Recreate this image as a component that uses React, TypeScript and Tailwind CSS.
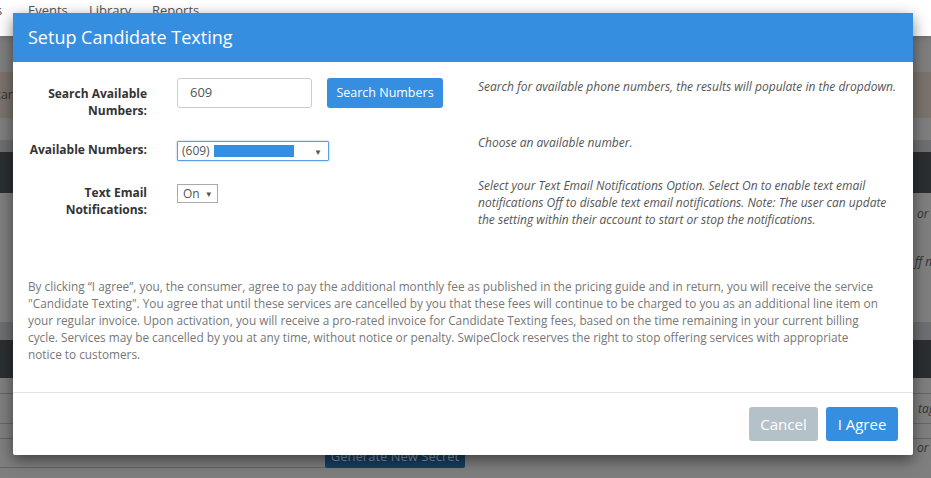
const FONT = "font-['Open_Sans','Noto_Sans',sans-serif]";

function Caret() {
  return <span className="text-[8px] leading-none text-[#555]">▼</span>;
}

const LABEL = '-ml-[3px] w-[122px] whitespace-nowrap pt-[7px] text-right text-[12px] font-bold leading-[17px] text-[#333]';
const DESC = 'ml-[15px] flex-1 whitespace-nowrap text-[12px] italic leading-[17px] text-[#555]';

export default function App() {
  return (
    <div className={`relative h-[478px] w-[931px] overflow-hidden bg-[#7f7f7f] ${FONT}`}>
      {/* Page behind the overlay */}
      <nav className="relative z-10 flex h-9 items-start bg-white pt-[1px] text-[13px] text-[#555] shadow-[0_2px_6px_rgba(0,0,0,0.15)]">
        <span className="-ml-[4px] w-[32px]">s</span>
        <span className="w-[61px]">Events</span>
        <span className="w-[63px]">Library</span>
        <span>Reports</span>
      </nav>
      <div className="flex flex-col">
        <div className="h-[36px]" />
        <div className="flex h-[46px] items-center bg-[#7b736c] text-[13px] text-[#3a3633]">
          <span className="-ml-[4px]">tar</span>
        </div>
        <div className="h-[22px]" />
        <div className="h-[12px] bg-[#6d6f72]" />
        <div className="h-[41px] bg-[#2c2f32]" />
        <div className="flex h-[129px] flex-col items-end pt-[12px] text-[12px] italic text-[#333]">
          <span className="-mr-[6px]">or c</span>
          <span className="mt-[30px] -mr-[8px]">ff no</span>
        </div>
        <div className="h-[18px] bg-[#6d6f72]" />
        <div className="h-[38px] bg-[#2c2f32]" />
        <div className="h-[16px] border-b border-[#666]" />
        <div className="flex h-[30px] items-center justify-end border-b border-[#666] text-[12px] italic text-[#333]">
          <span className="-mr-[4px]">tag</span>
        </div>
        <div className="h-[15px] border-b border-[#666]" />
        <div className="flex h-[30px] items-start">
          <div className="h-[29px] w-[325px] border-b border-[#666]" />
          <div className="mt-[6px] flex h-[23px] w-[140px] items-center justify-center rounded-[2px] bg-[#173f63] text-[13px] text-[#8797a8]">
            Generate New Secret
          </div>
          <div className="flex flex-1 justify-end pt-[0px] text-[12px] italic text-[#333]">
            <span className="-mr-[6px]">or c</span>
          </div>
        </div>
      </div>

      {/* Modal */}
      <div className="absolute left-[13px] top-[13px] z-20 flex w-[900px] flex-col rounded-[2px] bg-white shadow-[0_5px_15px_rgba(0,0,0,0.5)]">
        <div className="flex h-[49px] items-center bg-[#368ee0] px-[15px] text-[18px] text-white">
          Setup Candidate Texting
        </div>

        <div className="flex flex-col px-[15px] pb-[29px] pt-[16px]">
          {/* Search */}
          <div className="flex items-start">
            <label className={LABEL}>
              Search Available
              <br />
              Numbers:
            </label>
            <div className="ml-[30px] flex w-[286px] items-start gap-[15px]">
              <div className="flex h-[30px] w-[135px] items-center rounded-[3px] border border-[#ccc] px-[12px] text-[13px] text-[#555]">
                609
              </div>
              <button className="h-[30px] w-[116px] rounded-[3px] bg-[#368ee0] text-[12.5px] text-white">
                Search Numbers
              </button>
            </div>
            <p className={DESC}>Search for available phone numbers, the results will populate in the dropdown.</p>
          </div>

          {/* Available numbers */}
          <div className="mt-[15px] flex items-start">
            <label className={LABEL}>Available Numbers:</label>
            <div className="ml-[30px] w-[286px] pt-[7px]">
              <div className="flex h-[20px] w-[152px] items-center rounded-[1px] border border-[#5a9ee6] pl-[4px] pr-[6px] text-[12px] text-[#555] shadow-[0_0_2px_rgba(54,142,224,0.6)]">
                <span>(609)</span>
                <span className="ml-[4px] h-[12px] w-[80px] bg-[#368ee0]" />
                <span className="ml-auto">
                  <Caret />
                </span>
              </div>
            </div>
            <p className={DESC}>Choose an available number.</p>
          </div>

          {/* Notifications */}
          <div className="mt-[16px] flex items-start">
            <label className={LABEL}>
              Text Email
              <br />
              Notifications:
            </label>
            <div className="ml-[30px] w-[286px] pt-[7px]">
              <div className="flex h-[19px] w-[41px] items-center gap-[5px] border border-[#a9a9a9] pl-[5px] text-[12px] text-[#555]">
                <span>On</span>
                <Caret />
              </div>
            </div>
            <p className={DESC}>
              Select your Text Email Notifications Option. Select On to enable text email
              <br />
              notifications Off to disable text email notifications. Note: The user can update
              <br />
              the setting within their account to start or stop the notifications.
            </p>
          </div>

          {/* Terms */}
          <p className="mt-[50px] whitespace-nowrap text-[11.8px] leading-[17px] text-[#777]">
            By clicking “I agree”, you, the consumer, agree to pay the additional monthly fee as published in the pricing guide and in return, you will receive the service
            <br />
            "Candidate Texting". You agree that until these services are cancelled by you that these fees will continue to be charged to you as an additional line item on
            <br />
            your regular invoice. Upon activation, you will receive a pro-rated invoice for Candidate Texting fees, based on the time remaining in your current billing
            <br />
            cycle. Services may be cancelled by you at any time, without notice or penalty. SwipeClock reserves the right to stop offering services with appropriate
            <br />
            notice to customers.
          </p>
        </div>

        <div className="flex justify-end gap-[8px] border-t border-[#e5e5e5] px-[15px] pb-[14px] pt-[14px]">
          <button className="h-[34px] w-[69px] rounded-[3px] bg-[#b5c1c8] text-[15px] text-white">Cancel</button>
          <button className="h-[34px] w-[72px] rounded-[3px] bg-[#368ee0] text-[15px] text-white">I Agree</button>
        </div>
      </div>
    </div>
  );
}
